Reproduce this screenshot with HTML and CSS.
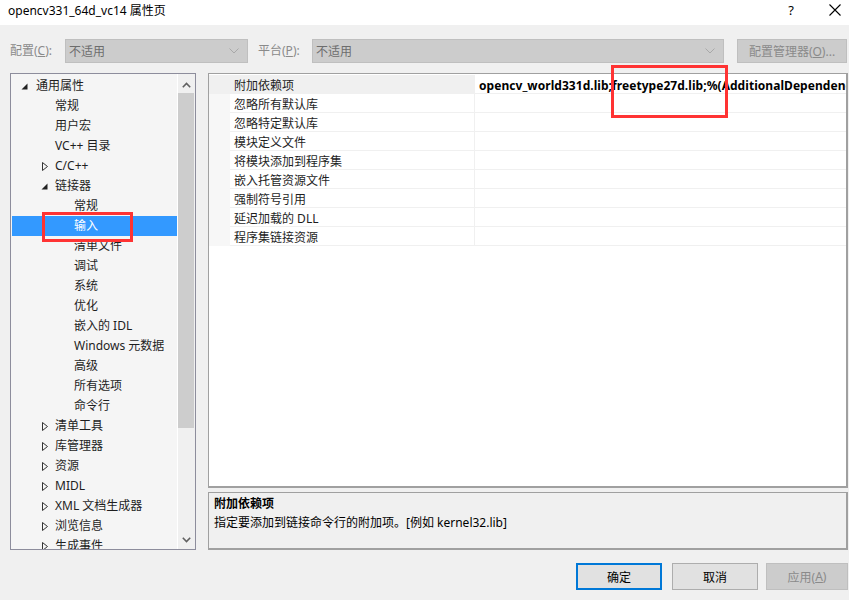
FILE: index.html
```html
<!DOCTYPE html>
<html lang="zh">
<head>
<meta charset="utf-8">
<title>opencv331_64d_vc14 属性页</title>
<link rel="stylesheet" href="styles.css">
</head>
<body>
<div class="window">
  <div class="titlebar">
    <span class="title">opencv331_64d_vc14 属性页</span>
    <span class="tb-btns"><span class="help">?</span>
      <svg class="close" width="12" height="12" viewBox="0 0 12 12"><path d="M0.5 0.5 L11.5 11.5 M11.5 0.5 L0.5 11.5" stroke="#000" stroke-width="1.1" fill="none"/></svg>
    </span>
  </div>

  <div class="toolbar">
    <span class="lbl">配置(<u>C</u>):</span>
    <div class="combo combo-cfg"><span>不适用</span><svg width="10" height="6" viewBox="0 0 10 6"><path d="M0.5 0.5 L5 5 L9.5 0.5" stroke="#a8a8a8" fill="none"/></svg></div>
    <span class="lbl lbl-plat">平台(<u>P</u>):</span>
    <div class="combo combo-plat"><span>不适用</span><svg width="10" height="6" viewBox="0 0 10 6"><path d="M0.5 0.5 L5 5 L9.5 0.5" stroke="#a8a8a8" fill="none"/></svg></div>
    <div class="btn-cfgmgr">配置管理器(<u>O</u>)...</div>
  </div>

  <div class="main">
    <div class="tree">
      <ul class="tree-list">
        <li class="l1"><svg class="exp" width="7" height="7" viewBox="0 0 7 7"><path d="M6.5 0.5 L6.5 6.5 L0.5 6.5 Z" fill="#222"/></svg>通用属性</li>
        <li class="l2">常规</li>
        <li class="l2">用户宏</li>
        <li class="l2">VC++ 目录</li>
        <li class="l2 has"><svg class="col" width="6" height="9" viewBox="0 0 6 9"><path d="M0.5 0.5 L5.5 4.5 L0.5 8.5 Z" fill="none" stroke="#333"/></svg>C/C++</li>
        <li class="l2 has"><svg class="exp" width="7" height="7" viewBox="0 0 7 7"><path d="M6.5 0.5 L6.5 6.5 L0.5 6.5 Z" fill="#222"/></svg>链接器</li>
        <li class="l3">常规</li>
        <li class="l3 sel">输入</li>
        <li class="l3">清单文件</li>
        <li class="l3">调试</li>
        <li class="l3">系统</li>
        <li class="l3">优化</li>
        <li class="l3">嵌入的 IDL</li>
        <li class="l3">Windows 元数据</li>
        <li class="l3">高级</li>
        <li class="l3">所有选项</li>
        <li class="l3">命令行</li>
        <li class="l2 has"><svg class="col" width="6" height="9" viewBox="0 0 6 9"><path d="M0.5 0.5 L5.5 4.5 L0.5 8.5 Z" fill="none" stroke="#333"/></svg>清单工具</li>
        <li class="l2 has"><svg class="col" width="6" height="9" viewBox="0 0 6 9"><path d="M0.5 0.5 L5.5 4.5 L0.5 8.5 Z" fill="none" stroke="#333"/></svg>库管理器</li>
        <li class="l2 has"><svg class="col" width="6" height="9" viewBox="0 0 6 9"><path d="M0.5 0.5 L5.5 4.5 L0.5 8.5 Z" fill="none" stroke="#333"/></svg>资源</li>
        <li class="l2 has"><svg class="col" width="6" height="9" viewBox="0 0 6 9"><path d="M0.5 0.5 L5.5 4.5 L0.5 8.5 Z" fill="none" stroke="#333"/></svg>MIDL</li>
        <li class="l2 has"><svg class="col" width="6" height="9" viewBox="0 0 6 9"><path d="M0.5 0.5 L5.5 4.5 L0.5 8.5 Z" fill="none" stroke="#333"/></svg>XML 文档生成器</li>
        <li class="l2 has"><svg class="col" width="6" height="9" viewBox="0 0 6 9"><path d="M0.5 0.5 L5.5 4.5 L0.5 8.5 Z" fill="none" stroke="#333"/></svg>浏览信息</li>
        <li class="l2 has"><svg class="col" width="6" height="9" viewBox="0 0 6 9"><path d="M0.5 0.5 L5.5 4.5 L0.5 8.5 Z" fill="none" stroke="#333"/></svg>生成事件</li>
      </ul>
      <div class="vscroll">
        <svg class="arr" width="9" height="6" viewBox="0 0 9 6"><path d="M0.8 5.2 L4.5 1.5 L8.2 5.2" stroke="#606060" stroke-width="1.6" fill="none"/></svg>
        <div class="track"><div class="thumb"></div></div>
        <svg class="arr" width="9" height="6" viewBox="0 0 9 6"><path d="M0.8 0.8 L4.5 4.5 L8.2 0.8" stroke="#606060" stroke-width="1.6" fill="none"/></svg>
      </div>
    </div>

    <div class="right">
      <div class="grid">
        <div class="row selrow"><div class="margin"></div><div class="name">附加依赖项</div><div class="val">opencv_world331d.lib;freetype27d.lib;%(AdditionalDependencies)</div></div>
        <div class="row"><div class="margin"></div><div class="name">忽略所有默认库</div><div class="val"></div></div>
        <div class="row"><div class="margin"></div><div class="name">忽略特定默认库</div><div class="val"></div></div>
        <div class="row"><div class="margin"></div><div class="name">模块定义文件</div><div class="val"></div></div>
        <div class="row"><div class="margin"></div><div class="name">将模块添加到程序集</div><div class="val"></div></div>
        <div class="row"><div class="margin"></div><div class="name">嵌入托管资源文件</div><div class="val"></div></div>
        <div class="row"><div class="margin"></div><div class="name">强制符号引用</div><div class="val"></div></div>
        <div class="row"><div class="margin"></div><div class="name">延迟加载的 DLL</div><div class="val"></div></div>
        <div class="row"><div class="margin"></div><div class="name">程序集链接资源</div><div class="val"></div></div>
      </div>
      <div class="desc">
        <div class="desc-title">附加依赖项</div>
        <div class="desc-text">指定要添加到链接命令行的附加项。[例如 kernel32.lib]</div>
      </div>
    </div>
  </div>

  <div class="buttons">
    <div class="btn btn-ok">确定</div>
    <div class="btn">取消</div>
    <div class="btn btn-dis">应用(<u>A</u>)</div>
  </div>

  <div class="mark mark-tree"></div>
  <div class="mark mark-val"></div>
</div>
</body>
</html>
```

FILE: styles.css
```css
* { box-sizing: border-box; }
html, body { margin: 0; padding: 0; }
body {
  width: 849px;
  height: 600px;
  overflow: hidden;
  background: #f0f0f0;
  font-family: "Noto Sans", "Noto Sans CJK SC", sans-serif;
  font-size: 12px;
  color: #000;
}
.window {
  position: relative;
  width: 849px;
  height: 600px;
  display: flex;
  flex-direction: column;
}
.titlebar {
  height: 25px;
  background: #fff;
  display: flex;
  align-items: center;
  justify-content: space-between;
  padding: 0 8px 0 8px;
}
.title { font-size: 12px; line-height: 16px; margin-top: -4px; }
.tb-btns { display: flex; align-items: center; gap: 35px; margin-top: -6px; margin-right: 0; }
.help { font-size: 13px; line-height: 16px; }
.close { display: block; }

.toolbar {
  display: flex;
  align-items: center;
  height: 24px;
  margin-top: 14px;
  padding-left: 10px;
  color: #8a8a8a;
}
.lbl { width: 55px; line-height: 16px; }
.lbl-plat { width: 54px; margin-left: 10px; }
.combo {
  height: 24px;
  background: #cccccc;
  border: 1px solid #bfbfbf;
  display: flex;
  align-items: center;
  justify-content: space-between;
  padding: 0 8px 0 3px;
  color: #6d6d6d;
  font-size: 12px;
}
.combo-cfg { width: 183px; }
.combo-plat { width: 412px; }
.btn-cfgmgr {
  margin-left: 13px;
  width: 110px;
  height: 24px;
  background: #cccccc;
  border: 1px solid #bfbfbf;
  color: #8a8a8a;
  display: flex;
  align-items: center;
  justify-content: center;
}

.main {
  display: flex;
  margin-top: 10px;
  height: 477px;
  padding-left: 10px;
}
.tree {
  width: 186px;
  height: 477px;
  border: 1px solid #8d8d9c;
  background: #f5f5f5;
  display: flex;
  overflow: hidden;
}
.tree-list {
  list-style: none;
  margin: 0;
  padding: 2px 0 0 1px;
  flex: 1;
  overflow: hidden;
}
.tree-list li {
  height: 20px;
  line-height: 20px;
  white-space: nowrap;
  position: relative;
  color: #1e1e1e;
}
.l1 { padding-left: 24px; }
.l2 { padding-left: 43px; }
.l3 { padding-left: 62px; }
.tree-list li svg { position: absolute; top: 7px; }
.l1 svg.exp { left: 9px; }
.l2 svg.exp { left: 29px; }
.l2 svg.col { left: 30px; top: 6px; }
.tree-list li.sel { background: #3399ff; color: #fff; }

.vscroll {
  width: 18px;
  border-left: 1px solid #fff;
  background: #f0f0f0;
  display: flex;
  flex-direction: column;
  align-items: center;
}
.vscroll .arr { flex: none; margin: 8px 0 5px; }
.vscroll .arr:last-child { margin: 5px 0 6px; }
.track { flex: 1; width: 100%; }
.thumb { width: 16px; height: 335px; background: #cdcdcd; margin-left: 0; }

.right {
  margin-left: 12px;
  width: 640px;
  display: flex;
  flex-direction: column;
}
.grid {
  height: 415px;
  border: 2px solid #a0a0a0;
  border-top-width: 1px;
  border-left-width: 1px;
  background: #fff;
  overflow: hidden;
  padding-top: 1px;
}
.row {
  display: flex;
  height: 19px;
  line-height: 22px;
}
.margin { width: 21px; background: #f7f7f7; flex: none; }
.name {
  width: 245px;
  flex: none;
  padding-left: 4px;
  border-bottom: 1px solid #f0f0f0;
  border-right: 1px solid #f0f0f0;
  color: #1e1e1e;
}
.val {
  flex: 1;
  border-bottom: 1px solid #f0f0f0;
  padding-left: 4px;
  white-space: nowrap;
  overflow: hidden;
  font-weight: bold;
  letter-spacing: 0.05px;
}
.selrow .name { background: #f0f0f0; }
.selrow .margin { background: #f0f0f0; }

.desc {
  margin-top: 4px;
  height: 58px;
  border: 2px solid #a0a0a0;
  border-top-width: 1px;
  border-left-width: 1px;
  background: #f0f0f0;
  padding: 1px 5px;
  line-height: 19px;
}
.desc-title { font-weight: bold; }

.buttons {
  display: flex;
  justify-content: flex-end;
  gap: 10px;
  margin-top: 13px;
  padding-right: 1px;
}
.btn {
  width: 86px;
  height: 27px;
  border: 1px solid #adadad;
  background: #e1e1e1;
  display: flex;
  align-items: center;
  justify-content: center;
}
.btn-ok { border: 2px solid #0078d7; }
.btn-dis { width: 82px; margin-left: -2px; background: #cccccc; border-color: #bfbfbf; color: #8a8a8a; }

.mark {
  position: absolute;
  border: 3px solid #ff3333;
}
.mark-tree { left: 42px; top: 212px; width: 91px; height: 30px; }
.mark-val { left: 611px; top: 65px; width: 117px; height: 53px; }
```
